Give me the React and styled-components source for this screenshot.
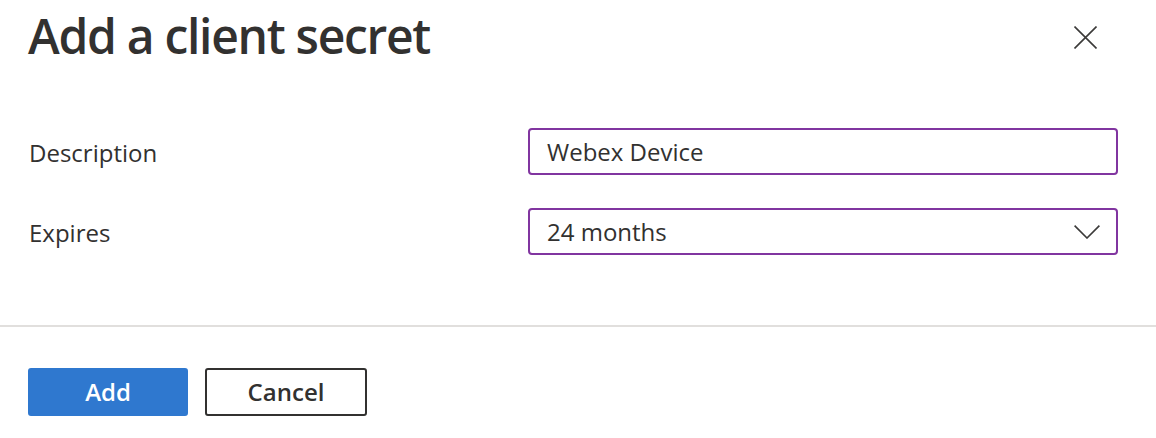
import React from "react";
import styled, { createGlobalStyle } from "styled-components";

const Global = createGlobalStyle`
  html, body { margin: 0; padding: 0; background: #ffffff; }
  body { font-family: "Open Sans", "Noto Sans", sans-serif; color: #323130; }
  * { box-sizing: border-box; }
`;

const Panel = styled.div`
  width: 1156px;
  height: 438px;
  background: #fff;
  overflow: hidden;
`;

const Header = styled.div`
  display: flex;
  align-items: center;
  justify-content: space-between;
  height: 72px;
  padding: 0 59px 0 28px;
`;

const Title = styled.h1`
  margin: 0;
  font-size: 48px;
  font-weight: 600;
  line-height: 72px;
  color: #323130;
  letter-spacing: -1.3px;
`;

const CloseButton = styled.button`
  display: flex;
  align-items: center;
  justify-content: center;
  width: 23px;
  height: 23px;
  padding: 0;
  border: none;
  background: transparent;
  margin-top: 3px;
  cursor: pointer;
`;

const Form = styled.div`
  display: grid;
  grid-template-columns: 500px 590px;
  row-gap: 33px;
  align-items: center;
  margin-top: 56px;
  padding-left: 28px;
`;

const Label = styled.label`
  font-size: 24px;
  line-height: 32px;
  color: #323130;
  padding-top: 2px;
  padding-left: 1px;
`;

const Field = styled.div`
  display: flex;
  align-items: center;
  justify-content: space-between;
  height: 47px;
  border: 2px solid #8135a0;
  border-radius: 4px;
  padding: 0 16px 0 17px;
  font-size: 24px;
  color: #323130;
`;

const FieldText = styled.span`
  line-height: 32px;
`;

const Divider = styled.div`
  height: 2px;
  background: #e1dfdd;
  margin-top: 70px;
`;

const Footer = styled.div`
  display: flex;
  gap: 17px;
  padding: 41px 0 0 28px;
`;

const Button = styled.button`
  height: 48px;
  width: ${(p) => p.$width}px;
  border-radius: 3px;
  font-family: "Open Sans", "Noto Sans", sans-serif;
  font-size: 24px;
  font-weight: 600;
  display: flex;
  align-items: center;
  justify-content: center;
  padding: 0 0 2px 0;
  cursor: pointer;
  border: 2px solid ${(p) => (p.$primary ? "#2f78cf" : "#323130")};
  background: ${(p) => (p.$primary ? "#2f78cf" : "#ffffff")};
  color: ${(p) => (p.$primary ? "#ffffff" : "#323130")};
`;

export default function App() {
  return (
    <Panel>
      <Global />
      <Header>
        <Title>Add a client secret</Title>
        <CloseButton aria-label="Close">
          <svg width="23" height="23" viewBox="0 0 23 23">
            <path d="M0.5 0.5 L22.5 22.5 M22.5 0.5 L0.5 22.5" stroke="#3b3a39" strokeWidth="1.6" fill="none" />
          </svg>
        </CloseButton>
      </Header>
      <Form>
        <Label>Description</Label>
        <Field>
          <FieldText>Webex Device</FieldText>
        </Field>
        <Label>Expires</Label>
        <Field>
          <FieldText>24 months</FieldText>
          <svg width="26" height="14" viewBox="0 0 26 14">
            <path d="M0.6 0.6 L13 13 L25.4 0.6" stroke="#3b3a39" strokeWidth="1.6" fill="none" />
          </svg>
        </Field>
      </Form>
      <Divider />
      <Footer>
        <Button $primary $width={160}>Add</Button>
        <Button $width={162}>Cancel</Button>
      </Footer>
    </Panel>
  );
}
